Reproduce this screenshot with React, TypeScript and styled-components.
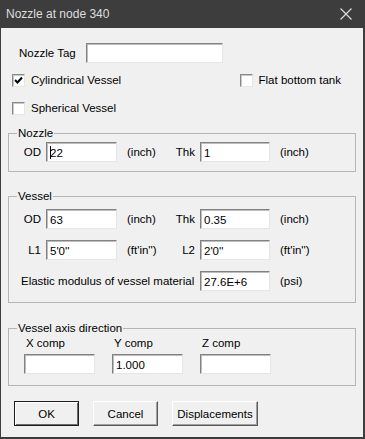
import React from "react";
import styled, { createGlobalStyle } from "styled-components";

const GlobalStyle = createGlobalStyle`
  html, body {
    margin: 0;
    padding: 0;
    background: #3d3d3d;
  }
  body {
    font-family: "Liberation Sans", Arial, sans-serif;
  }
`;

const Window = styled.div`
  width: 365px;
  height: 439px;
  box-sizing: border-box;
  display: flex;
  flex-direction: column;
  background: #3d3d3d;
  border-left: 1px solid #3d3d3d;
  border-right: 2px solid #3d3d3d;
  border-bottom: 2px solid #3d3d3d;
`;

const TitleBar = styled.div`
  height: 28px;
  flex: none;
  display: flex;
  align-items: center;
  justify-content: space-between;
  padding: 0 11px 0 5px;
  color: #dedede;
  font-family: "Liberation Sans", Arial, sans-serif;
  font-size: 12px;
`;

const Body = styled.div`
  flex: 1;
  background: #f0f0f0;
  padding: 15px 7px 0 7px;
  font-size: 11.5px;
  color: #000;
  line-height: 14px;
`;

const TagRow = styled.div`
  display: flex;
  align-items: center;
  gap: 10px;
  padding-left: 11px;
  height: 20px;
`;

const CheckRow = styled.div<{ $top: number }>`
  display: flex;
  align-items: center;
  justify-content: space-between;
  margin-top: ${p => p.$top}px;
  padding-left: 4px;
  padding-right: 15px;
  height: 14px;
`;

const CheckItem = styled.label`
  display: flex;
  align-items: center;
  gap: 6px;
`;

const Box = styled.span`
  width: 13px;
  height: 13px;
  box-sizing: border-box;
  background: #fff;
  border: 1px solid;
  border-color: #8a8a8a #e6e6e6 #e6e6e6 #8a8a8a;
  box-shadow: inset 1px 1px #c8c8c8;
  display: flex;
  align-items: center;
  justify-content: center;
`;

const Group = styled.fieldset<{ $top: number; $pt: number; $pb: number }>`
  margin: ${p => p.$top}px 0 0 0;
  padding: ${p => p.$pt}px 0 ${p => p.$pb}px 0;
  border: 1px solid #b5b5b5;
  min-width: 0;
`;

const Legend = styled.legend`
  padding: 0 1px;
  margin-left: 8px;
  line-height: 14px;
`;

const Grid = styled.div`
  display: grid;
  grid-template-columns: 37px 71px 55px 28px 70px auto;
  align-items: center;
  row-gap: 11px;
`;

const Label = styled.span`
  text-align: right;
  padding-right: 5px;
`;

const Unit = styled.span`
  padding-left: 10px;
`;

const WideLabel = styled.span`
  grid-column: 1 / span 4;
  padding-left: 12px;
`;

const Field = styled.div<{ $w?: number }>`
  width: ${p => (p.$w ? `${p.$w}px` : "auto")};
  height: 20px;
  box-sizing: border-box;
  background: #fff;
  border: 1px solid;
  border-color: #828282 #e6e6e6 #e6e6e6 #828282;
  box-shadow: inset 1px 1px #bdbdbd;
  padding: 3px 0 0 3px;
  line-height: 14px;
  white-space: nowrap;
  overflow: hidden;
`;

const Caret = styled.span`
  display: inline-block;
  width: 1px;
  height: 13px;
  background: #000;
  vertical-align: top;
  margin-right: -1px;
`;

const AxisRow = styled.div`
  display: flex;
  gap: 17px;
  padding-left: 15px;
`;

const AxisCol = styled.div`
  display: flex;
  flex-direction: column;
  gap: 4px;
  width: 71px;
`;

const AxisLabel = styled.span`
  padding-left: 2px;
`;

const ButtonRow = styled.div`
  display: flex;
  gap: 14px;
  margin-top: 15px;
  padding-left: 6px;
`;

const Button = styled.button<{ $w: number; $default?: boolean }>`
  width: ${p => p.$w}px;
  height: 25px;
  box-sizing: border-box;
  background: #f0f0f0;
  font-family: "Liberation Sans", Arial, sans-serif;
  font-size: 11.5px;
  color: #000;
  padding: 0;
  border: 1px solid;
  border-color: ${p => (p.$default ? "#1e1e1e" : "#ffffff #5a5a5a #5a5a5a #ffffff")};
  box-shadow: ${p =>
    p.$default
      ? "inset 1px 1px #ffffff, inset -1px -1px #6a6a6a"
      : "inset -1px -1px #a0a0a0"};
`;

const Check = () => (
  <svg width="9" height="9" viewBox="0 0 9 9">
    <path d="M1 4 L3.5 6.5 L8 1.5" stroke="#000" strokeWidth="2" fill="none" />
  </svg>
);

const CloseIcon = () => (
  <svg width="12" height="12" viewBox="0 0 12 12">
    <path d="M0.5 0.5 L11.5 11.5 M11.5 0.5 L0.5 11.5" stroke="#e0e0e0" strokeWidth="1.1" />
  </svg>
);

export default function App() {
  return (
    <>
      <GlobalStyle />
      <Window>
        <TitleBar>
          <span>Nozzle at node 340</span>
          <CloseIcon />
        </TitleBar>
        <Body>
          <TagRow>
            <span>Nozzle Tag</span>
            <Field $w={137} />
          </TagRow>

          <CheckRow $top={10}>
            <CheckItem>
              <Box>
                <Check />
              </Box>
              Cylindrical Vessel
            </CheckItem>
            <CheckItem>
              <Box />
              Flat bottom tank
            </CheckItem>
          </CheckRow>
          <CheckRow $top={14}>
            <CheckItem>
              <Box />
              Spherical Vessel
            </CheckItem>
          </CheckRow>

          <Group $top={11} $pt={2} $pb={9}>
            <Legend>Nozzle</Legend>
            <Grid>
              <Label>OD</Label>
              <Field>
                <Caret />
                22
              </Field>
              <Unit>(inch)</Unit>
              <Label>Thk</Label>
              <Field>1</Field>
              <Unit>(inch)</Unit>
            </Grid>
          </Group>

          <Group $top={17} $pt={6} $pb={11}>
            <Legend>Vessel</Legend>
            <Grid>
              <Label>OD</Label>
              <Field>63</Field>
              <Unit>(inch)</Unit>
              <Label>Thk</Label>
              <Field>0.35</Field>
              <Unit>(inch)</Unit>

              <Label>L1</Label>
              <Field>5'0''</Field>
              <Unit>(ft'in'')</Unit>
              <Label>L2</Label>
              <Field>2'0''</Field>
              <Unit>(ft'in'')</Unit>

              <WideLabel>Elastic modulus of vessel material</WideLabel>
              <Field>27.6E+6</Field>
              <Unit>(psi)</Unit>
            </Grid>
          </Group>

          <Group $top={18} $pt={1} $pb={11}>
            <Legend>Vessel axis direction</Legend>
            <AxisRow>
              <AxisCol>
                <AxisLabel>X comp</AxisLabel>
                <Field />
              </AxisCol>
              <AxisCol>
                <AxisLabel>Y comp</AxisLabel>
                <Field>1.000</Field>
              </AxisCol>
              <AxisCol>
                <AxisLabel>Z comp</AxisLabel>
                <Field />
              </AxisCol>
            </AxisRow>
          </Group>

          <ButtonRow>
            <Button $w={65} $default>
              OK
            </Button>
            <Button $w={65}>Cancel</Button>
            <Button $w={86}>Displacements</Button>
          </ButtonRow>
        </Body>
      </Window>
    </>
  );
}
